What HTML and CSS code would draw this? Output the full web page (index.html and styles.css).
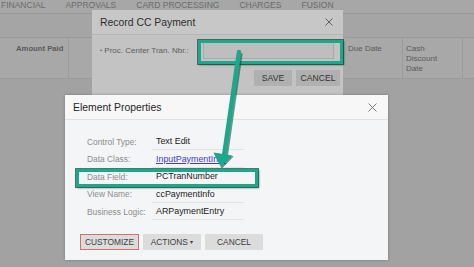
FILE: index.html
```html
<!DOCTYPE html>
<html>

<head>
    <link rel="stylesheet" href="styles.css">
</head>

<body>

    <div class="page">
        <div class="tabs">
            <span>FINANCIAL</span>
            <span>APPROVALS</span>
            <span>CARD PROCESSING</span>
            <span>CHARGES</span>
            <span>FUSION</span>
        </div>

        <div class="toolbar"></div>

        <div class="grid-head">
            <div class="col col-amount">Amount Paid</div>
            <div class="col col-wide"></div>
            <div class="col col-due">Due Date</div>
            <div class="col col-cash">Cash<br>Discount<br>Date</div>
            <div class="col"></div>
        </div>

        <!-- dialog behind (dimmed) -->
        <div class="dialog dialog-back">
            <div class="dialog-header">
                <span class="dialog-title">Record CC Payment</span>
                <svg class="close" width="8" height="8" viewBox="0 0 8 8">
                    <path d="M0.5 0.5 L7.5 7.5 M7.5 0.5 L0.5 7.5" stroke="#5e5e5e" stroke-width="1" />
                </svg>
            </div>
            <div class="back-body">
                <div class="back-row">
                    <span class="back-label"><span class="bullet">&bull;</span> Proc. Center Tran. Nbr.:</span>
                    <div class="back-input"></div>
                </div>
                <div class="back-buttons">
                    <button class="back-btn save">SAVE</button>
                    <button class="back-btn cancel">CANCEL</button>
                </div>
            </div>
        </div>
        <div class="highlight hl-input"></div>

        <!-- element properties -->
        <div class="dialog dialog-front">
            <div class="dialog-header front-header">
                <span class="dialog-title">Element Properties</span>
                <svg class="close front-close" width="9" height="9" viewBox="0 0 9 9">
                    <path d="M0.5 0.5 L8.5 8.5 M8.5 0.5 L0.5 8.5" stroke="#7a7a7a" stroke-width="1" />
                </svg>
            </div>
            <div class="props">
                <div class="prop"><span class="prop-label">Control Type:</span><span class="prop-value">Text Edit</span></div>
                <div class="prop"><span class="prop-label">Data Class:</span><span class="prop-value"><a href="#">InputPaymentInfo</a></span></div>
                <div class="prop"><span class="prop-label">Data Field:</span><span class="prop-value">PCTranNumber</span></div>
                <div class="prop"><span class="prop-label">View Name:</span><span class="prop-value">ccPaymentInfo</span></div>
                <div class="prop"><span class="prop-label">Business Logic:</span><span class="prop-value">ARPaymentEntry</span></div>
            </div>
            <div class="front-buttons">
                <button class="btn btn-customize">CUSTOMIZE</button>
                <button class="btn">ACTIONS <span class="caret">&#9662;</span></button>
                <button class="btn">CANCEL</button>
            </div>
            <div class="highlight hl-field"></div>
        </div>

        <svg class="arrow" width="474" height="267" viewBox="0 0 474 267">
            <g transform="translate(1,1)" fill="#0b3f34" stroke="#0b3f34" opacity="0.55">
                <line x1="239" y1="52" x2="224" y2="156" stroke-width="5.5" />
                <polygon points="213.5,152.5 232,155.5 221,167" />
            </g>
            <line x1="239" y1="52" x2="224" y2="156" stroke="#1aa98b" stroke-width="4.5" stroke-linecap="round" />
            <polygon points="213.5,152.5 232,155.5 221,167" fill="#1aa98b" />
        </svg>
    </div>

</body>

</html>
```

FILE: styles.css
```css
body {
    margin: 0;
    font-family: "Liberation Sans", Arial, sans-serif;
    background-color: #a2a2a2;
    overflow: hidden;
}

.page {
    position: relative;
    width: 474px;
    height: 267px;
    overflow: hidden;
}

.tabs {
    display: flex;
    gap: 20px;
    height: 13px;
    padding-left: 1px;
    background-color: #a7a7a7;
    border-bottom: 1px solid #999;
    font-size: 8.5px;
    color: #6b6b6b;
}

.tabs span {
    line-height: 10px;
}

.toolbar {
    height: 23px;
    background-color: #a5a5a5;
    border-bottom: 1px solid #999;
}

.grid-head {
    display: flex;
    height: 40px;
    background-color: #a8a8a8;
    border-bottom: 1px solid #9a9a9a;
    font-size: 8px;
    color: #5a5a5a;
}

.col {
    padding-top: 6px;
    line-height: 10px;
}

.col-amount {
    width: 52px;
    padding-left: 16px;
    font-weight: bold;
    font-size: 7.7px;
    border-right: 1px solid #9c9c9c;
}

.col-wide {
    width: 271px;
}

.col-due {
    width: 54px;
    padding-left: 8px;
    border-right: 1px solid #9c9c9c;
}

.col-cash {
    width: 56px;
    padding-left: 3px;
    border-right: 1px solid #9c9c9c;
}

.dialog {
    position: absolute;
}

.dialog-back {
    left: 92px;
    top: 10px;
    width: 251px;
    height: 92px;
    background-color: #c3c3c3;
}

.dialog-header {
    display: flex;
    justify-content: space-between;
    align-items: center;
    height: 24px;
    padding: 0 8px;
    background-color: #c7c7c7;
    border-bottom: 1px solid #b6b6b6;
}

.dialog-title {
    font-size: 10.4px;
    color: #2d2d2d;
}

.close {
    margin-right: 2px;
}

.back-body {
    padding: 7px 3px 0 8px;
}

.back-row {
    display: flex;
    align-items: center;
    height: 16px;
}

.back-label {
    width: 103px;
    font-size: 8px;
    color: #5c5c5c;
}

.bullet {
    font-size: 6px;
    vertical-align: 1px;
}

.back-input {
    width: 129px;
    height: 15px;
    background-color: #bebebe;
    border: 1px solid #aaa;
}

.back-buttons {
    display: flex;
    justify-content: flex-end;
    gap: 4px;
    margin-top: 12px;
}

.back-btn {
    height: 16px;
    padding: 0;
    border: none;
    background-color: #b0b0b0;
    color: #333;
    font-family: inherit;
    font-size: 8.6px;
}

.save {
    width: 38px;
}

.cancel {
    width: 44px;
}

.highlight {
    position: absolute;
    border: 3px solid #1aa98b;
    box-shadow: 0 0 0 1px rgba(10, 70, 55, 0.7), 1px 1px 2px rgba(0, 0, 0, 0.5);
}

.hl-input {
    left: 198px;
    top: 40px;
    width: 139px;
    height: 18px;
}

.dialog-front {
    left: 65px;
    top: 95px;
    width: 323px;
    height: 165px;
    background-color: #f4f5f7;
    box-shadow: 0 0 3px rgba(0, 0, 0, 0.25);
}

.front-header {
    height: 24px;
    background-color: #f7f7f8;
    border-bottom: 1px solid #e2e2e2;
}

.front-header .dialog-title {
    color: #262626;
}

.front-close {
    margin-right: 3px;
}

.props {
    padding: 13px 0 0 22px;
}

.prop {
    display: flex;
    align-items: center;
    height: 17.5px;
}

.prop-label {
    width: 65px;
    font-size: 8.4px;
    color: #8c8c8c;
}

.prop-value {
    width: 92px;
    height: 17px;
    line-height: 17px;
    padding-left: 4px;
    font-size: 8.9px;
    color: #222;
    border-bottom: 1px solid #e4e4e6;
    box-sizing: border-box;
}

.prop-value a {
    color: #3b3bd6;
}

.front-buttons {
    display: flex;
    gap: 4px;
    margin: 13px 0 0 15px;
}

.btn {
    width: 58px;
    height: 16px;
    padding: 0;
    border: none;
    background-color: #dcdcdc;
    color: #3d3d3d;
    font-family: inherit;
    font-size: 8.4px;
}

.btn-customize {
    width: 59px;
    border: 1px solid #d27070;
}

.caret {
    font-size: 6px;
    vertical-align: 1px;
}

.hl-field {
    left: 11px;
    top: 74px;
    width: 176px;
    height: 12px;
}

.arrow {
    position: absolute;
    left: 0;
    top: 0;
    pointer-events: none;
}
```
